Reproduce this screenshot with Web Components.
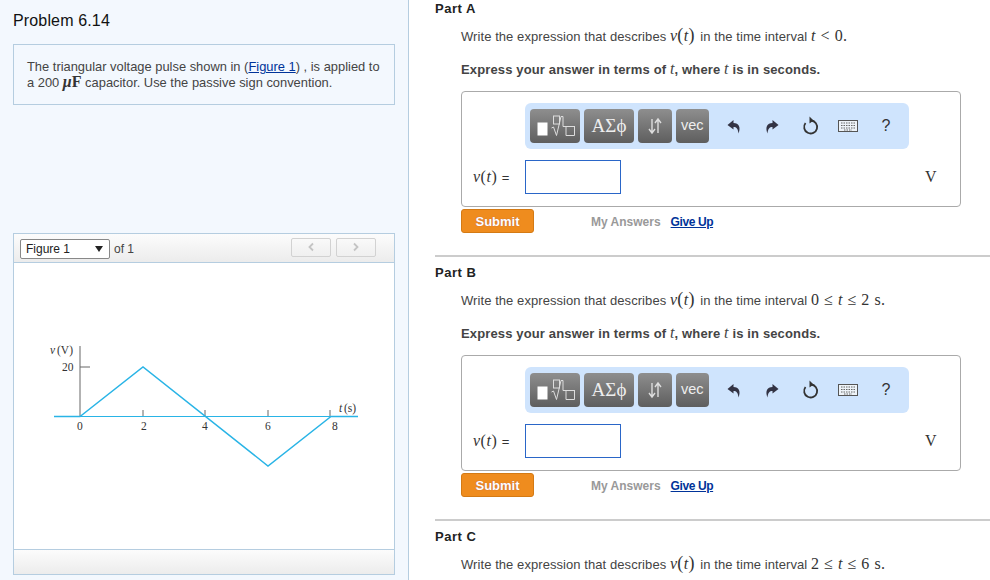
<!DOCTYPE html>
<html>
<head>
<meta charset="utf-8">
<style>
  html, body { margin: 0; height: 580px; overflow: hidden; background: #fff; }
  body { font: 13px "Liberation Sans", Arial, sans-serif; color: #333; }
  .m { font: 16px/0 "Liberation Serif", serif; color: #333; }
  .mf { font: bold 16px/0 "Liberation Serif", serif; color: #333; }
  .q { letter-spacing: .07px; }
  .q .m { letter-spacing: .3px; word-spacing: .5px; }
  .q .fn { margin-right: 2px; }
  .m .p { font-size: 18px; }
</style>
</head>
<body>
<problem-page>
  <problem-sidebar slot="side">
    <span slot="title">Problem 6.14</span>
    The triangular voltage pulse shown in (<a href="#" style="color:#039">Figure 1</a>) , is applied to a 200 <span class="mf"><i>μ</i>F</span> capacitor. Use the passive sign convention.
  </problem-sidebar>
  <div slot="main">
    <problem-part name="Part A">
      <span slot="question" class="q">Write the expression that describes <span class="m fn"><i>v</i><span class="p">(</span><i>t</i><span class="p">)</span></span> in the time interval <span class="m"><i>t</i> &lt; 0.</span></span>
    </problem-part>
    <problem-part name="Part B">
      <span slot="question" class="q">Write the expression that describes <span class="m fn"><i>v</i><span class="p">(</span><i>t</i><span class="p">)</span></span> in the time interval <span class="m">0 ≤ <i>t</i> ≤ 2 s.</span></span>
    </problem-part>
    <problem-part name="Part C" question-only>
      <span slot="question" class="q">Write the expression that describes <span class="m fn"><i>v</i><span class="p">(</span><i>t</i><span class="p">)</span></span> in the time interval <span class="m">2 ≤ <i>t</i> ≤ 6 s.</span></span>
    </problem-part>
  </div>
</problem-page>

<script>
class ProblemPage extends HTMLElement {
  constructor() {
    super();
    this.attachShadow({ mode: 'open' }).innerHTML = `
      <style>
        :host { display: grid; grid-template-columns: 409px 1fr; height: 580px; }
        .main { padding: 0 0 0 26px; overflow: hidden; }
      </style>
      <slot name="side"></slot>
      <div class="main"><slot name="main"></slot></div>
    `;
  }
}

class ProblemSidebar extends HTMLElement {
  constructor() {
    super();
    this.attachShadow({ mode: 'open' }).innerHTML = `
      <style>
        :host {
          display: block; box-sizing: border-box; height: 580px; padding: 11px 13px 0 13px;
          background: #f3f8fe; border-right: 1px solid #b5cde0;
        }
        h1 { margin: 0 0 14px; font: 16px/19px "Liberation Sans", Arial, sans-serif; letter-spacing: .15px; color: #111; }
        .statement {
          box-sizing: border-box; height: 61px; padding: 14px 8px 14px 13px; line-height: 16px;
          border: 1px solid #b5cde0; color: #444; font-size: 12.900px;
        }
        figure-panel { margin-top: 128px; }
      </style>
      <h1><slot name="title"></slot></h1>
      <div class="statement"><slot></slot></div>
      <figure-panel></figure-panel>
    `;
  }
}

class FigurePanel extends HTMLElement {
  constructor() {
    super();
    this.attachShadow({ mode: 'open' }).innerHTML = `
      <style>
        :host { display: block; box-sizing: border-box; height: 342px; border: 1px solid #b5cde0; font-size: 12px; }
        .panel { display: flex; flex-direction: column; height: 100%; }
        .bar { background: linear-gradient(#fcfcfc, #ececec); }
        .top {
          height: 29px; box-sizing: border-box; border-bottom: 1px solid #b5cde0;
          display: flex; align-items: center; gap: 4px; padding: 1px 18px 0 6px; color: #444;
        }
        .select {
          box-sizing: border-box; width: 90px; height: 20px; padding: 0 5px; background: #fff;
          border: 1px solid #888; border-radius: 2px; display: flex; align-items: center;
          justify-content: space-between; color: #222;
        }
        .select svg { margin-right: 1px; }
        .nav { margin-left: auto; display: flex; gap: 5px; margin-top: -3px; }
        .nav span {
          box-sizing: border-box; width: 40px; height: 19px; border: 1px solid #d2d2d2; border-radius: 2px;
          display: flex; align-items: center; justify-content: center;
        }
        .graph { flex: 1; background: #fff; overflow: hidden; }
        .graph svg { display: block; }
        .bottom { height: 24px; border-top: 1px solid #b5cde0; }
        text { font-family: "Liberation Serif", serif; font-size: 11.500px; fill: #333; }
      </style>
      <div class="panel">
        <div class="bar top">
          <div class="select">Figure 1
            <svg width="8" height="8" viewBox="0 0 8 8"><path d="M0 1H8L4 7Z" fill="#222"/></svg>
          </div>
          <span>of 1</span>
          <div class="nav">
            <span><svg width="8" height="10" viewBox="0 0 8 10"><path d="M6 1.500L2.500 5L6 8.500" fill="none" stroke="#c4c4c4" stroke-width="1.800"/></svg></span>
            <span><svg width="8" height="10" viewBox="0 0 8 10"><path d="M2 1.500L5.500 5L2 8.500" fill="none" stroke="#c4c4c4" stroke-width="1.800"/></svg></span>
          </div>
        </div>
        <div class="graph">
          <svg width="380" height="286" viewBox="14 263 380 286">
            <path d="M80 346V417M80 367H90M143 410V417M205 410V417M268 410V417M330 410V417" fill="none" stroke="#666" stroke-width="1"/>
            <path d="M54 416.500H80L143 367L268 466L331 416.500H358" fill="none" stroke="#29b4e6" stroke-width="1.400"/>
            <path d="M80 416.500H331" fill="none" stroke="#29b4e6" stroke-width="1.200"/>
            <text x="50" y="354" font-style="italic">v</text><text x="57" y="354">(V)</text>
            <text x="62" y="371">20</text>
            <text x="77" y="430">0</text><text x="141" y="430">2</text><text x="202" y="430">4</text>
            <text x="265" y="430">6</text><text x="332" y="430">8</text>
            <text x="339" y="412" font-style="italic">t</text><text x="344" y="412">(s)</text>
          </svg>
        </div>
        <div class="bar bottom"></div>
      </div>
    `;
  }
}

class MathToolbar extends HTMLElement {
  constructor() {
    super();
    this.attachShadow({ mode: 'open' }).innerHTML = `
      <style>
        :host {
          display: flex; align-items: center; box-sizing: border-box; width: 384px; height: 46px;
          padding: 0 0 0 5px; background: #cfe4fd; border-radius: 6px;
        }
        .btn {
          box-sizing: border-box; height: 34px; margin-right: 4px; border-radius: 4px;
          background: linear-gradient(#8e8e8e, #5e5e5e); color: #eee;
          display: flex; align-items: center; justify-content: center;
        }
        .tool { width: 38px; display: flex; justify-content: center; align-items: center; color: #333; }
        .tools { margin-left: 2px; display: flex; }
      </style>
      <div class="btn" style="width:50px">
        <svg width="50" height="34" viewBox="0 0 50 34">
          <rect x="7.500" y="13.500" width="10" height="13" fill="#fff"/>
          <path d="M21.500 19l2 -1l3 8.500l4.500 -19H33V17.500H45M36 17.500V26.500H44.500V17.500" fill="none" stroke="#ddd" stroke-width="1"/>
          <rect x="23.500" y="7" width="6" height="8" fill="none" stroke="#ddd"/>
        </svg>
      </div>
      <div class="btn" style="width:50px;font:19px 'Liberation Serif',serif">ΑΣϕ</div>
      <div class="btn" style="width:33.500px">
        <svg width="16" height="18" viewBox="0 0 16 18"><path d="M5 2V15M2 12l3 4l3 -4M11 16V3M8 6l3 -4l3 4" fill="none" stroke="#ddd" stroke-width="1.400"/></svg>
      </div>
      <div class="btn" style="width:33.500px;font-size:14.500px;padding-bottom:3px">vec</div>
      <div class="tools">
        <div class="tool"><svg width="14" height="15" viewBox="0 0 14 15"><path d="M6.500 1L0.500 6L6.500 10.500V8C9.500 8 11 9.500 11.500 14.500C14 8.500 12 4 6.500 4Z" fill="#334"/></svg></div>
        <div class="tool"><svg width="14" height="15" viewBox="0 0 14 15"><path d="M7.500 1L13.500 6L7.500 10.500V8C4.500 8 3 9.500 2.500 14.500C0 8.500 2 4 7.500 4Z" fill="#334"/></svg></div>
        <div class="tool"><svg width="18" height="20" viewBox="0 0 18 20"><path d="M10 4.500A6.500 6.500 0 1 1 4.500 7" fill="none" stroke="#333" stroke-width="1.800"/><path d="M8.500 0.500L12.500 4.500L8.500 7.500Z" fill="#333"/></svg></div>
        <div class="tool"><svg width="20" height="12" viewBox="0 0 20 12"><rect x="0.500" y="0.500" width="19" height="11" fill="#eef3f8" stroke="#555"/><path d="M3 3H17M3 5.500H17M3 8H17M6 10H14" stroke="#666" stroke-dasharray="1.500 1" fill="none"/></svg></div>
        <div class="tool" style="font-size:16px">?</div>
      </div>
    `;
  }
}

class AnswerBox extends HTMLElement {
  constructor() {
    super();
    this.attachShadow({ mode: 'open' }).innerHTML = `
      <style>
        :host {
          display: block; box-sizing: border-box; width: 500px; height: 116px; padding: 11px 0 0 63px;
          border: 1px solid #aaa; border-radius: 4px; background: #fff;
        }
        .row {
          display: flex; align-items: center; margin: 11px 0 0 -52px; padding-right: 23px;
          font: 16px "Liberation Serif", serif; color: #333; letter-spacing: .5px;
        }
        .label { width: 52px; white-space: nowrap; }
        .label span { font: 13px "Liberation Sans", sans-serif; }
        .input { box-sizing: border-box; width: 96px; height: 34px; border: 1px solid #2a66c8; }
        .unit { margin-left: auto; font-size: 16px; }
      </style>
      <math-toolbar></math-toolbar>
      <div class="row">
        <div class="label"><i>v</i>(<i>t</i>) <span>=</span></div>
        <div class="input"></div>
        <div class="unit">V</div>
      </div>
    `;
  }
}

class ProblemPart extends HTMLElement {
  constructor() {
    super();
    this.attachShadow({ mode: 'open' }).innerHTML = `
      <style>
        :host { display: block; box-sizing: border-box; height: 264px; }
        h2 { margin: 0; font: bold 13px/17px "Liberation Sans", sans-serif; letter-spacing: .5px; color: #222; height: 17px; }
        .body { padding: 0 0 0 26px; }
        .q { height: 20px; margin-top: 10px; line-height: 20px; color: #444; white-space: nowrap; }
        .hint { margin-top: 13px; height: 20px; line-height: 20px; font-weight: bold; color: #444; white-space: nowrap; letter-spacing: .14px; }
        .hint i { font: italic 16px/0 "Liberation Serif", serif; }
        answer-box { margin-top: 11px; }
        .actions { display: flex; align-items: center; margin-top: 2px; height: 24px; font-size: 12px; }
        .submit {
          box-sizing: border-box; width: 73px; height: 24px; padding-top: 1px; background: #ef8c1e; border: 1px solid #d47a14;
          border-radius: 3px; color: #fff; font-weight: bold; font-size: 13px; display: flex; align-items: center;
          justify-content: center; text-shadow: 0 0 1px #a55;
        }
        .mine { margin-left: 57px; margin-top: 2px; font-weight: bold; color: #999; }
        .give { margin-left: 10px; margin-top: 2px; font-weight: bold; letter-spacing: -.4px; color: #039; text-decoration: underline; }
        hr { margin: 22px 0 0 -26px; border: 0; height: 2px; background: #ccc; }
      </style>
      <h2 id="name"></h2>
      <div class="body">
        <div class="q"><slot name="question"></slot></div>
        <div id="rest">
          <div class="hint">Express your answer in terms of <i>t</i>, where <i>t</i> is in seconds.</div>
          <answer-box></answer-box>
          <div class="actions">
            <div class="submit">Submit</div>
            <span class="mine">My Answers</span>
            <span class="give">Give Up</span>
          </div>
          <hr>
        </div>
      </div>
    `;
  }
  connectedCallback() {
    const root = this.shadowRoot;
    root.getElementById('name').textContent = this.getAttribute('name');
    if (this.hasAttribute('question-only')) root.getElementById('rest').remove();
  }
}

customElements.define('math-toolbar', MathToolbar);
customElements.define('answer-box', AnswerBox);
customElements.define('figure-panel', FigurePanel);
customElements.define('problem-part', ProblemPart);
customElements.define('problem-sidebar', ProblemSidebar);
customElements.define('problem-page', ProblemPage);
</script>
</body>
</html>
